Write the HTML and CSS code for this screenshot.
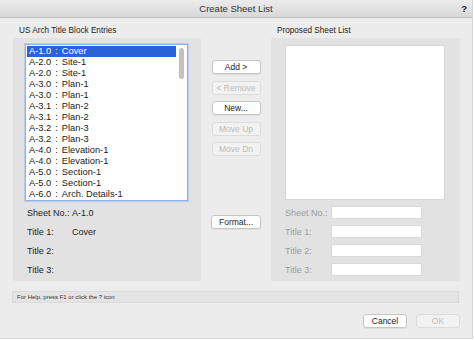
FILE: index.html
```html
<!DOCTYPE html>
<html lang="en">
<head>
  <meta charset="UTF-8" />
  <title>Create Sheet List</title>
  <link rel="stylesheet" href="styles.css">
</head>
<body>
<div class="dialog">
  <div class="titlebar">
    <span class="title">Create Sheet List</span>
    <span class="help">?</span>
  </div>

  <div class="main">
    <div class="column">
      <div class="group-label">US Arch Title Block Entries</div>
      <div class="panel left-panel">
        <div class="listbox">
          <ul class="items">
            <li class="selected">A-1.0<i>:</i>Cover</li>
            <li>A-2.0<i>:</i>Site-1</li>
            <li>A-2.0<i>:</i>Site-1</li>
            <li>A-3.0<i>:</i>Plan-1</li>
            <li>A-3.0<i>:</i>Plan-1</li>
            <li>A-3.1<i>:</i>Plan-2</li>
            <li>A-3.1<i>:</i>Plan-2</li>
            <li>A-3.2<i>:</i>Plan-3</li>
            <li>A-3.2<i>:</i>Plan-3</li>
            <li>A-4.0<i>:</i>Elevation-1</li>
            <li>A-4.0<i>:</i>Elevation-1</li>
            <li>A-5.0<i>:</i>Section-1</li>
            <li>A-5.0<i>:</i>Section-1</li>
            <li>A-6.0<i>:</i>Arch. Details-1</li>
          </ul>
          <div class="scrollbar"><div class="thumb"></div></div>
        </div>
        <div class="info">
          <span>Sheet No.:</span><span>A-1.0</span>
          <span>Title 1:</span><span>Cover</span>
          <span>Title 2:</span><span></span>
          <span>Title 3:</span><span></span>
        </div>
      </div>
    </div>

    <div class="buttons">
      <button class="btn">Add &gt;</button>
      <button class="btn" disabled>&lt; Remove</button>
      <button class="btn">New...</button>
      <button class="btn" disabled>Move Up</button>
      <button class="btn" disabled>Move Dn</button>
      <button class="btn format">Format...</button>
    </div>

    <div class="column">
      <div class="group-label">Proposed Sheet List</div>
      <div class="panel right-panel">
        <div class="proposed"></div>
        <div class="fields">
          <label>Sheet No.:</label><input type="text" disabled />
          <label>Title 1:</label><input type="text" disabled />
          <label>Title 2:</label><input type="text" disabled />
          <label>Title 3:</label><input type="text" disabled />
        </div>
      </div>
    </div>
  </div>

  <div class="status">For Help, press F1 or click the ? icon</div>

  <div class="footer">
    <button class="btn wide">Cancel</button>
    <button class="btn wide" disabled>OK</button>
  </div>
</div>
</body>
</html>
```

FILE: styles.css
```css
body { margin: 0; background: #fff; font-family: "Liberation Sans", Arial, sans-serif; color: #222; }
.dialog { width: 472px; height: 338px; background: #ececec; border-right: 1px solid #d6d6d6; border-bottom: 1px solid #d6d6d6; display: flex; flex-direction: column; }

.titlebar { height: 17px; display: flex; align-items: center; justify-content: center; position: relative; background: linear-gradient(#ececec, #d8d8d8); border-bottom: 1px solid #bdbdbd; font-size: 9.5px; color: #333; }
.help { position: absolute; right: 5px; top: 3px; font-weight: bold; font-size: 9.5px; color: #222; }

.main { display: flex; padding: 8px 0 0 13px; }
.column { display: flex; flex-direction: column; }
.group-label { font-size: 8.2px; height: 12px; padding-left: 6px; color: #222; }
.panel { background: #e2e2e2; border-radius: 2px; height: 243px; box-sizing: border-box; }
.left-panel { width: 188px; padding: 6px 13px 0 12px; }
.right-panel { width: 189px; padding: 7px 15px 0 14px; }

.listbox { height: 157px; background: #fff; border: 1px solid #8fb0ea; box-shadow: 0 0 0 1px #b8ccf0; box-sizing: border-box; display: flex; }
.items { list-style: none; margin: 0; padding: 1px 0 0 1px; flex: 1; }
.items li { height: 11px; line-height: 11px; font-size: 9.3px; white-space: pre; padding-left: 2px; color: #1a1a1a; }
.items li i { font-style: normal; margin: 0 4px 0 4px; }
.items li.selected { background: #2a62d9; color: #fff; }
.scrollbar { width: 11px; padding: 3px 0 0 3px; box-sizing: border-box; }
.thumb { width: 5px; height: 31px; border-radius: 3px; background: #c2c2c2; }

.info { display: grid; grid-template-columns: 45px auto; row-gap: 8px; padding: 7px 0 0 2px; font-size: 9px; }
.info span { height: 11px; line-height: 11px; }

.buttons { width: 70px; display: flex; flex-direction: column; align-items: center; padding-top: 34px; }
.btn { width: 49px; height: 14px; padding: 0; margin-bottom: 6.5px; background: #fff; border: 1px solid #c6c6c6; border-radius: 3px; box-shadow: 0 1px 0 rgba(0,0,0,0.06); font-family: "Liberation Sans", Arial, sans-serif; font-size: 8.5px; color: #222; }
.btn:disabled { background: #f2f2f2; border-color: #dcdcdc; color: #bcbcbc; box-shadow: none; }
.btn.format { margin-top: 52px; width: 50px; }

.proposed { height: 155px; background: #fff; border: 1px solid #d6d6d6; box-sizing: border-box; }
.fields { display: grid; grid-template-columns: 46px 91px; row-gap: 6px; padding-top: 6px; align-items: center; }
.fields label { font-size: 9px; color: #9c9c9c; }
.fields input { height: 13px; box-sizing: border-box; margin: 0; border: 1px solid #dadada; background: #fff; }

.status { margin: 10px 13px 0 12px; height: 12px; background: #e4e4e4; border: 1px solid #dadada; box-sizing: border-box; font-size: 6px; line-height: 10px; padding-left: 4px; color: #333; }

.footer { display: flex; justify-content: flex-end; gap: 9px; padding: 11px 12px 0 0; }
.btn.wide { width: 44px; margin: 0; }
```
